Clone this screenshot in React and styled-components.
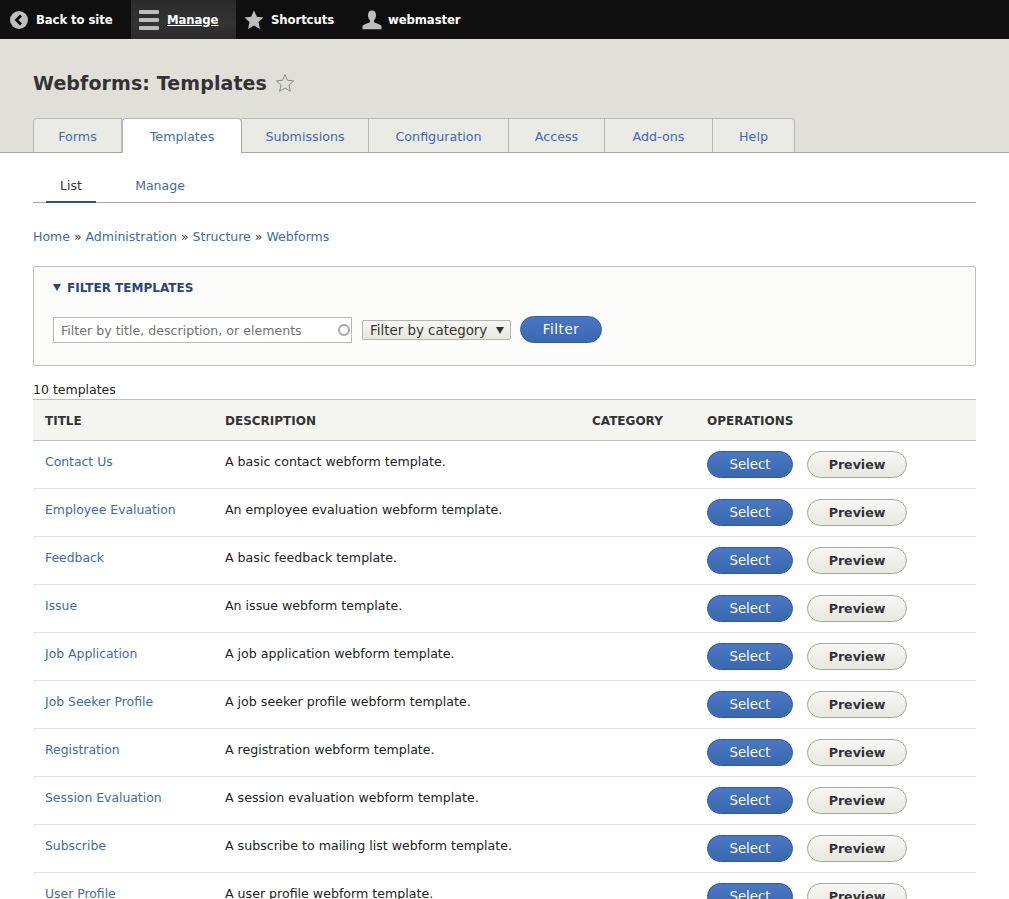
import React from 'react';
import styled, { createGlobalStyle } from 'styled-components';

const FONT = '"DejaVu Sans", "Liberation Sans", sans-serif';

const GlobalStyle = createGlobalStyle`
  html, body {
    margin: 0;
    padding: 0;
    background: #fff;
    overflow: hidden;
  }
  body {
    font-family: ${FONT};
    font-size: 13px;
    color: #222330;
  }
  * {
    box-sizing: border-box;
  }
`;

const Toolbar = styled.div`
  display: flex;
  align-items: stretch;
  height: 39px;
  background: #0f0f0f;
  box-shadow: 0 1px 2px rgba(0, 0, 0, 0.3);
`;

const ToolbarItem = styled.a`
  display: flex;
  align-items: center;
  gap: ${(p) => p.$gap || 8}px;
  width: ${(p) => p.$width}px;
  padding-left: ${(p) => p.$pad}px;
  color: #fff;
  font-size: 11.7px;
  font-weight: 700;
  letter-spacing: -0.1px;
  text-decoration: ${(p) => (p.$active ? 'underline' : 'none')};
  background: ${(p) => (p.$active ? 'linear-gradient(#2b2b2b, #333 60%, #2a2a2a)' : 'transparent')};
`;

const Header = styled.div`
  height: 114px;
  padding: 30px 0 0 33px;
  background: #e0e0d8;
  border-bottom: 1px solid #a6a6a0;
  display: flex;
  flex-direction: column;
`;

const TitleRow = styled.div`
  display: flex;
  align-items: center;
  gap: 8px;
  height: 28px;
`;

const Title = styled.h1`
  margin: 0;
  font-size: 19px;
  font-weight: 700;
  line-height: 28px;
  letter-spacing: 0.1px;
  color: #333;
`;

const Tabs = styled.div`
  display: flex;
  margin-top: 21px;
  height: 34px;
`;

const Tab = styled.a`
  display: flex;
  align-items: center;
  justify-content: center;
  width: ${(p) => p.$width}px;
  height: ${(p) => (p.$active ? 35 : 34)}px;
  padding-top: ${(p) => (p.$active ? 1 : 2)}px;
  font-size: 12.7px;
  color: #3d69b5;
  background: ${(p) => (p.$active ? '#fff' : '#ebebe6')};
  border: 1px solid #b8b8b2;
  border-left-width: ${(p) => (p.$first || p.$active ? 1 : 0)}px;
  border-right-color: ${(p) => (p.$active ? '#a6a6a0' : '#b8b8b2')};
  border-bottom: none;
  border-top-left-radius: ${(p) => (p.$first || p.$active ? 4 : 0)}px;
  border-top-right-radius: ${(p) => (p.$last || p.$active ? 4 : 0)}px;
  position: relative;
  z-index: ${(p) => (p.$active ? 1 : 0)};
`;

const Content = styled.div`
  padding: 0 33px;
`;

const SubTabs = styled.div`
  display: flex;
  height: 50px;
  padding-left: 13px;
  border-bottom: 1px solid #a6a6a6;
`;

const SubTab = styled.a`
  display: flex;
  align-items: flex-start;
  justify-content: center;
  width: ${(p) => p.$width}px;
  height: 50px;
  padding-top: 25px;
  line-height: 16px;
  font-size: 12.5px;
  color: ${(p) => (p.$active ? '#333' : '#3d69b5')};
  border-bottom: ${(p) => (p.$active ? '2px solid #2b4f8f' : 'none')};
`;

const Breadcrumb = styled.div`
  display: flex;
  margin-top: 25px;
  height: 18px;
  line-height: 18px;
  font-size: 12.5px;
  color: #333;
  white-space: pre;
`;

const Link = styled.a`
  color: #3d69b5;
  font-size: ${(p) => p.$size || 12.5}px;
`;

const FilterBox = styled.div`
  height: 100px;
  margin-top: 20px;
  padding: 13px 19px 0;
  background: #fcfcfa;
  border: 1px solid #bfbfba;
  border-radius: 2px;
`;

const FilterSummary = styled.div`
  display: flex;
  align-items: center;
  gap: 6px;
  height: 15px;
  font-size: 12px;
  font-weight: 700;
  color: #2b4480;
`;

const Caret = styled.span`
  width: 0;
  height: 0;
  border-left: 4px solid transparent;
  border-right: 4px solid transparent;
  border-top: 7px solid ${(p) => p.$color};
`;

const FilterRow = styled.div`
  display: flex;
  align-items: center;
  margin-top: 21px;
  height: 27px;
`;

const SearchField = styled.div`
  display: flex;
  align-items: center;
  justify-content: space-between;
  width: 299px;
  height: 26px;
  padding: 1px 1px 0 7px;
  background: #fff;
  border: 1px solid #b8b8b8;
  font-size: 12.6px;
  color: #72726e;
`;

const Spinner = styled.span`
  width: 12px;
  height: 12px;
  border: 2px solid #a8a8a8;
  border-radius: 50%;
`;

const CategorySelect = styled.div`
  display: flex;
  align-items: center;
  justify-content: space-between;
  width: 149px;
  height: 20px;
  margin-left: 10px;
  padding: 1px 6px 0 7px;
  font-size: 13.4px;
  color: #333;
  background: linear-gradient(#f6f6f3, #e7e7df);
  border: 1px solid #b5b5af;
  border-radius: 2px;
`;

const PillButton = styled.a`
  display: flex;
  align-items: center;
  justify-content: center;
  width: ${(p) => p.$width}px;
  height: 27px;
  margin-left: ${(p) => p.$left || 0}px;
  font-size: ${(p) => (p.$primary ? 13.3 : 12.6)}px;
  font-weight: ${(p) => (p.$primary ? 400 : 700)};
  letter-spacing: ${(p) => p.$spacing || 0}px;
  color: ${(p) => (p.$primary ? '#fff' : '#333')};
  background: ${(p) => (p.$primary ? 'linear-gradient(#4a77c2, #3a67b1)' : 'linear-gradient(#f6f6f3, #e8e8e2)')};
  border: 1px solid ${(p) => (p.$primary ? '#2f5da5' : '#a6a6a0')};
  border-radius: 14px;
`;

const Count = styled.div`
  margin-top: 15px;
  height: 18px;
  line-height: 18px;
  font-size: 12.5px;
  color: #222;
`;

const Table = styled.table`
  width: 100%;
  table-layout: fixed;
  border-collapse: collapse;
`;

const HeadCell = styled.th`
  width: ${(p) => p.$width}px;
  height: 41px;
  padding: 2px 0 0 12px;
  text-align: left;
  font-size: 12px;
  font-weight: 700;
  color: #333;
  background: #f5f5f2;
  border-top: 1px solid #bfbfba;
  border-bottom: 1px solid #bfbfba;
`;

const Row = styled.tr`
  height: 48px;
  border-bottom: 1px solid #e2e2de;
`;

const Cell = styled.td`
  padding: 0 0 7px 12px;
  font-size: 12.6px;
  color: #222;
`;

const OpsCell = styled.td`
  padding: 0 0 0 12px;
`;

const Ops = styled.div`
  display: flex;
`;

const BackIcon = () => (
  <svg width="18" height="18" viewBox="0 0 18 18">
    <circle cx="9" cy="9" r="9" fill="#bdbdbd" />
    <path d="M11 4.5 6.5 9l4.5 4.5" fill="none" stroke="#0f0f0f" strokeWidth="2.8" />
  </svg>
);

const MenuIcon = () => (
  <svg width="20" height="20" viewBox="0 0 20 20">
    <rect y="0" width="20" height="4" rx="1" fill="#bdbdbd" />
    <rect y="8" width="20" height="4" rx="1" fill="#bdbdbd" />
    <rect y="16" width="20" height="4" rx="1" fill="#bdbdbd" />
  </svg>
);

const StarIcon = () => (
  <svg width="20" height="20" viewBox="0 0 20 20">
    <path d="M10 0.5l2.8 6.3 6.7.7-5 4.6 1.4 6.8-5.9-3.5-5.9 3.5 1.4-6.8-5-4.6 6.7-.7z" fill="#bdbdbd" />
  </svg>
);

const UserIcon = () => (
  <svg width="20" height="20" viewBox="0 0 20 20">
    <path d="M10 .5c2.6 0 4 2 4 4.8 0 2.2-.9 4.2-2 5.2v1.7c1 .9 6.5 1.8 7.5 4v3H.5v-3c1-2.2 6.5-3.1 7.5-4v-1.7c-1.1-1-2-3-2-5.2C6 2.5 7.4.5 10 .5z" fill="#bdbdbd" />
  </svg>
);

const OutlineStar = () => (
  <svg width="20" height="20" viewBox="0 0 20 20">
    <path d="M10 1.5l2.5 5.8 6.2.6-4.700 4.200 1.400 6.200-5.400-3.300-5.400 3.300 1.400-6.200-4.700-4.200 6.200-.6z" fill="none" stroke="#8a8a80" strokeWidth="1" />
  </svg>
);

const tabs = [
  ['Forms', 89],
  ['Templates', 120],
  ['Submissions', 127],
  ['Configuration', 140],
  ['Access', 96],
  ['Add-ons', 108],
  ['Help', 82],
];

const templates = [
  ['Contact Us', 'A basic contact webform template.'],
  ['Employee Evaluation', 'An employee evaluation webform template.'],
  ['Feedback', 'A basic feedback template.'],
  ['Issue', 'An issue webform template.'],
  ['Job Application', 'A job application webform template.'],
  ['Job Seeker Profile', 'A job seeker profile webform template.'],
  ['Registration', 'A registration webform template.'],
  ['Session Evaluation', 'A session evaluation webform template.'],
  ['Subscribe', 'A subscribe to mailing list webform template.'],
  ['User Profile', 'A user profile webform template.'],
];

export default function App() {
  return (
    <>
      <GlobalStyle />
      <Toolbar>
        <ToolbarItem $width={131} $pad={10}>
          <BackIcon />
          Back to site
        </ToolbarItem>
        <ToolbarItem $width={105} $pad={8} $active>
          <MenuIcon />
          Manage
        </ToolbarItem>
        <ToolbarItem $width={118} $pad={8} $gap={7}>
          <StarIcon />
          Shortcuts
        </ToolbarItem>
        <ToolbarItem $pad={8} $gap={6}>
          <UserIcon />
          webmaster
        </ToolbarItem>
      </Toolbar>

      <Header>
        <TitleRow>
          <Title>Webforms: Templates</Title>
          <OutlineStar />
        </TitleRow>
        <Tabs>
          {tabs.map(([label, width], i) => (
            <Tab
              key={label}
              $width={width}
              $active={label === 'Templates'}
              $first={i === 0}
              $last={i === tabs.length - 1}
            >
              {label}
            </Tab>
          ))}
        </Tabs>
      </Header>

      <Content>
        <SubTabs>
          <SubTab $width={50} $active>List</SubTab>
          <SubTab $width={128}>Manage</SubTab>
        </SubTabs>

        <Breadcrumb>
          <Link>Home</Link> » <Link>Administration</Link> » <Link>Structure</Link> » <Link>Webforms</Link>
        </Breadcrumb>

        <FilterBox>
          <FilterSummary>
            <Caret $color="#2b4480" />
            FILTER TEMPLATES
          </FilterSummary>
          <FilterRow>
            <SearchField>
              Filter by title, description, or elements
              <Spinner />
            </SearchField>
            <CategorySelect>
              Filter by category
              <Caret $color="#333" />
            </CategorySelect>
            <PillButton $primary $width={82} $left={9} $spacing={0.6}>Filter</PillButton>
          </FilterRow>
        </FilterBox>

        <Count>10 templates</Count>

        <Table>
          <thead>
            <tr>
              <HeadCell $width={180}>TITLE</HeadCell>
              <HeadCell $width={367}>DESCRIPTION</HeadCell>
              <HeadCell $width={115}>CATEGORY</HeadCell>
              <HeadCell>OPERATIONS</HeadCell>
            </tr>
          </thead>
          <tbody>
            {templates.map(([title, description]) => (
              <Row key={title}>
                <Cell><Link $size={12.4}>{title}</Link></Cell>
                <Cell>{description}</Cell>
                <Cell />
                <OpsCell>
                  <Ops>
                    <PillButton $primary $width={86}>Select</PillButton>
                    <PillButton $width={100} $left={14}>Preview</PillButton>
                  </Ops>
                </OpsCell>
              </Row>
            ))}
          </tbody>
        </Table>
      </Content>
    </>
  );
}
